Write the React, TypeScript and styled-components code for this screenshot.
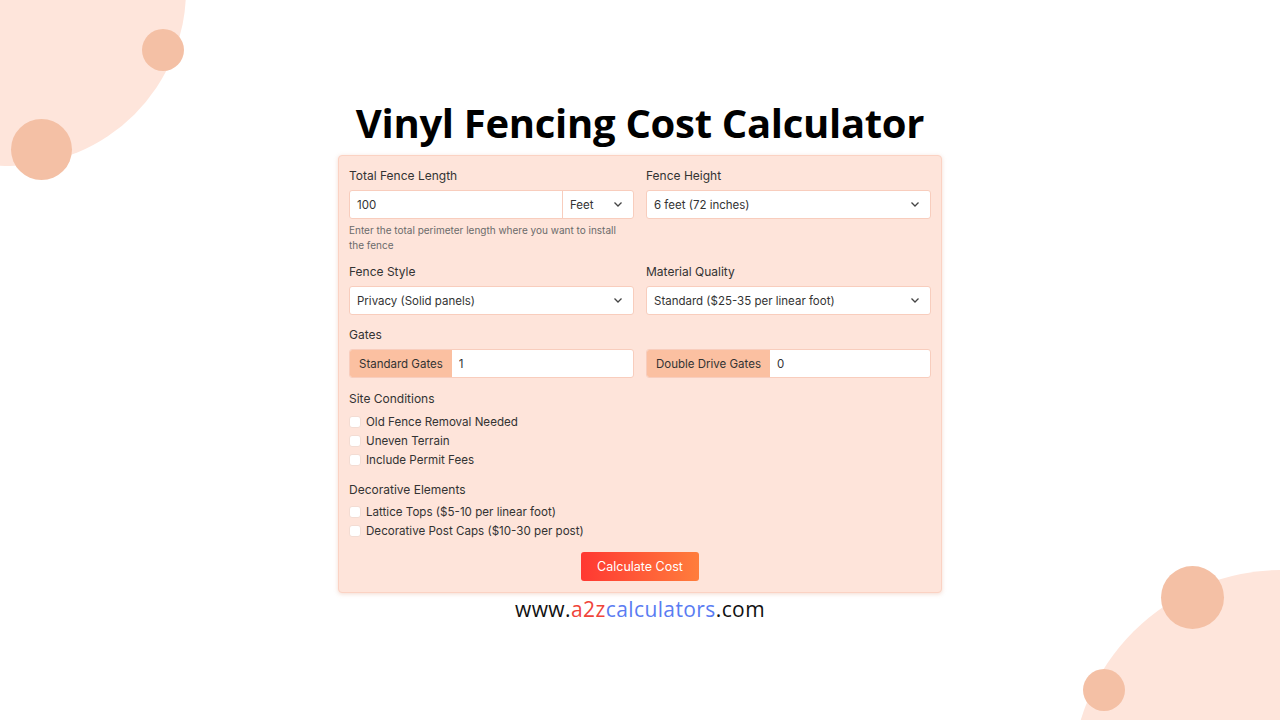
import React from 'react';
import styled, { createGlobalStyle } from 'styled-components';

const GlobalStyle = createGlobalStyle`
  html, body {
    margin: 0;
    padding: 0;
    background: #ffffff;
  }
  * {
    box-sizing: border-box;
  }
`;

const Page = styled.main`
  position: relative;
  width: 1280px;
  height: 720px;
  overflow: hidden;
  display: flex;
  flex-direction: column;
  align-items: center;
  padding-top: 98px;
  font-family: Inter, 'Noto Sans', sans-serif;
`;

const Blob = styled.div<{ size: number; x: number; y: number; tone: 'light' | 'dark' }>`
  position: absolute;
  width: ${(p) => p.size}px;
  height: ${(p) => p.size}px;
  left: ${(p) => p.x - p.size / 2}px;
  top: ${(p) => p.y - p.size / 2}px;
  border-radius: 50%;
  background: ${(p) => (p.tone === 'light' ? '#fee5db' : '#f4c0a5')};
  z-index: 0;
`;

const Title = styled.h1`
  position: relative;
  z-index: 1;
  margin: 0;
  font-family: 'Open Sans', sans-serif;
  font-weight: 700;
  font-size: 40px;
  line-height: 50px;
  color: #000;
  letter-spacing: -0.3px;
`;

const Card = styled.section`
  position: relative;
  z-index: 1;
  width: 604px;
  margin-top: 7px;
  padding: 11px 10px;
  background: #fee4da;
  border: 1px solid #fbd2c3;
  border-radius: 4px;
  box-shadow: 0 1px 4px rgba(220, 150, 120, 0.35);
  display: flex;
  flex-direction: column;
`;

const Grid = styled.div`
  display: grid;
  grid-template-columns: 1fr 1fr;
  column-gap: 12px;
  row-gap: 10px;
  align-items: start;
`;

const Field = styled.div`
  display: flex;
  flex-direction: column;
`;

const Label = styled.div`
  font-size: 12px;
  line-height: 18px;
  color: #333;
  margin-bottom: 5px;
`;

const SectionLabel = styled(Label)<{ gap?: number; after?: number }>`
  margin-top: ${(p) => p.gap ?? 0}px;
  margin-bottom: ${(p) => p.after ?? 5}px;
`;

const Control = styled.div`
  display: flex;
  height: 29px;
  background: #fff;
  border: 1px solid #f8cdbd;
  border-radius: 3px;
  overflow: hidden;
`;

const TextInput = styled.input`
  flex: 1;
  min-width: 0;
  border: none;
  outline: none;
  background: transparent;
  padding: 0 7px;
  font-family: Inter, sans-serif;
  font-size: 11.5px;
  color: #333;
`;

const SelectBox = styled.div<{ width?: number }>`
  position: relative;
  display: flex;
  align-items: center;
  width: ${(p) => (p.width ? `${p.width}px` : 'auto')};
  flex: ${(p) => (p.width ? 'none' : '1')};
  padding: 0 7px;
  font-size: 11.5px;
  color: #333;
  border-left: ${(p) => (p.width ? '1px solid #f8cdbd' : 'none')};
`;

const Chevron = styled.svg`
  position: absolute;
  right: 10px;
  top: 50%;
  margin-top: -4px;
`;

const Help = styled.div`
  margin-top: 4px;
  padding-right: 12px;
  font-size: 10px;
  line-height: 15px;
  color: #6b6b6b;
`;

const Addon = styled.div`
  display: flex;
  align-items: center;
  padding: 0 9px;
  background: #fbc0a1;
  font-size: 11.5px;
  color: #333;
  white-space: nowrap;
`;

const CheckList = styled.div`
  display: flex;
  flex-direction: column;
`;

const CheckRow = styled.label`
  display: flex;
  align-items: center;
  gap: 5px;
  height: 19px;
  font-size: 11.6px;
  color: #333;
`;

const Box = styled.span`
  width: 12px;
  height: 12px;
  background: #fff;
  border: 1px solid #f3dcd3;
  border-radius: 3px;
`;

const ButtonRow = styled.div`
  display: flex;
  justify-content: center;
  margin-top: 12px;
`;

const CalcButton = styled.button`
  height: 29px;
  width: 118px;
  border: none;
  border-radius: 3px;
  background: linear-gradient(90deg, #ff3832 0%, #ff7d3c 100%);
  color: #fff;
  font-family: Inter, sans-serif;
  font-size: 12.5px;
`;

const Site = styled.div`
  position: relative;
  z-index: 1;
  margin-top: 2px;
  font-family: 'Open Sans', sans-serif;
  font-size: 21px;
  letter-spacing: 0.4px;
  line-height: 28px;
  color: #111;
`;

const Red = styled.span`
  color: #f0443a;
`;

const Blue = styled.span`
  color: #5a7cf2;
`;

const Select = ({ value, width }: { value: string; width?: number }) => (
  <SelectBox width={width}>
    {value}
    <Chevron width="10" height="7" viewBox="0 0 10 7">
      <path d="M1.5 1.5 L5 5 L8.5 1.5" fill="none" stroke="#444" strokeWidth="1.3" />
    </Chevron>
  </SelectBox>
);

const Check = ({ text }: { text: string }) => (
  <CheckRow>
    <Box />
    {text}
  </CheckRow>
);

const App = () => (
  <Page>
    <GlobalStyle />
    <Blob tone="light" size={352} x={10} y={-10} />
    <Blob tone="dark" size={42} x={163} y={50} />
    <Blob tone="dark" size={61} x={41} y={149} />
    <Blob tone="light" size={420} x={1282} y={780} />
    <Blob tone="dark" size={63} x={1192} y={597} />
    <Blob tone="dark" size={42} x={1104} y={690} />

    <Title>Vinyl Fencing Cost Calculator</Title>
    <Card>
      <Grid>
        <Field>
          <Label>Total Fence Length</Label>
          <Control>
            <TextInput defaultValue="100" />
            <Select value="Feet" width={71} />
          </Control>
          <Help>Enter the total perimeter length where you want to install the fence</Help>
        </Field>
        <Field>
          <Label>Fence Height</Label>
          <Control>
            <Select value="6 feet (72 inches)" />
          </Control>
        </Field>
        <Field>
          <Label>Fence Style</Label>
          <Control>
            <Select value="Privacy (Solid panels)" />
          </Control>
        </Field>
        <Field>
          <Label>Material Quality</Label>
          <Control>
            <Select value="Standard ($25-35 per linear foot)" />
          </Control>
        </Field>
      </Grid>

      <SectionLabel gap={11}>Gates</SectionLabel>
      <Grid>
        <Control>
          <Addon>Standard Gates</Addon>
          <TextInput defaultValue="1" />
        </Control>
        <Control>
          <Addon>Double Drive Gates</Addon>
          <TextInput defaultValue="0" />
        </Control>
      </Grid>

      <SectionLabel gap={12} after={4}>Site Conditions</SectionLabel>
      <CheckList>
        <Check text="Old Fence Removal Needed" />
        <Check text="Uneven Terrain" />
        <Check text="Include Permit Fees" />
      </CheckList>

      <SectionLabel gap={12} after={3}>Decorative Elements</SectionLabel>
      <CheckList>
        <Check text="Lattice Tops ($5-10 per linear foot)" />
        <Check text="Decorative Post Caps ($10-30 per post)" />
      </CheckList>

      <ButtonRow>
        <CalcButton>Calculate Cost</CalcButton>
      </ButtonRow>
    </Card>
    <Site>
      www.<Red>a2z</Red>
      <Blue>calculators</Blue>.com
    </Site>
  </Page>
);

export default App;
